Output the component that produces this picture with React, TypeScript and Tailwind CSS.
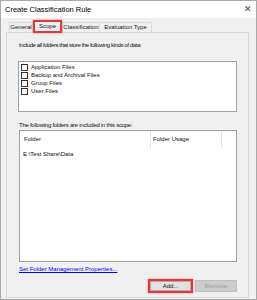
import React from "react";

const font = { fontFamily: '"Liberation Sans", Arial, sans-serif' };

function Checkbox({ label }: { label: string }) {
  return (
    <div className="flex items-center h-[8px]">
      <span className="w-[7px] h-[7px] border border-[#333] bg-white shrink-0" />
      <span className="ml-[3px] text-[6px] leading-none text-[#111]">{label}</span>
    </div>
  );
}

function Tab({ label, width }: { label: string; width: string }) {
  return (
    <div className={`${width} h-[10px] border border-b-0 border-[#d9d9d9] bg-[#f0f0f0] flex items-center justify-center text-[6px] text-[#111]`}>
      {label}
    </div>
  );
}

export default function App() {
  return (
    <div className="w-[257px] h-[300px] bg-[#f0f0f0] border border-[#aaa] flex flex-col overflow-hidden" style={font}>
      {/* title bar */}
      <div className="h-[17px] bg-white flex items-center justify-between pl-[4px] pr-[4px] shrink-0">
        <span className="text-[7.5px] text-[#000]">Create Classification Rule</span>
        <span className="text-[9px] text-[#444] leading-none">✕</span>
      </div>

      <div className="flex-1 flex flex-col pl-[5px] pr-[7px] pt-[2px] pb-[1px]">
        {/* tabs */}
        <div className="flex items-end h-[12px] pl-[3px]">
          <Tab label="General" width="w-[24px]" />
          <div className="relative -mb-px z-10 w-[29px] h-[13px] border-2 border-[#e0393b] bg-[#f0f0f0] shadow-[0_0_2px_rgba(224,57,59,0.6)] flex items-center justify-center text-[6px] text-[#111]">
            Scope
          </div>
          <Tab label="Classification" width="w-[38px]" />
          <div className="-ml-px">
            <Tab label="Evaluation Type" width="w-[53px]" />
          </div>
        </div>

        {/* panel */}
        <div className="flex-1 border border-[#d9d9d9] bg-[#f0f0f0] flex flex-col pl-[12px] pr-[11px] pt-[9px] pb-[4px]">
          <div className="text-[6px] text-[#111] leading-none tracking-[-0.4px]">
            Include all folders that store the following kinds of data:
          </div>

          <div className="mt-[13px] h-[51px] -ml-px border border-[#a0a0a0] bg-white pt-[1px] pl-[2px]">
            <Checkbox label="Application Files" />
            <Checkbox label="Backup and Archival Files" />
            <Checkbox label="Group Files" />
            <Checkbox label="User Files" />
          </div>

          <div className="mt-[10px] text-[6px] text-[#111] leading-none tracking-[-0.26px]">
            The following folders are included in this scope:
          </div>

          <div className="mt-[2px] h-[132px] border border-[#a0a0a0] bg-white flex flex-col">
            <div className="flex h-[17px] items-center text-[6px] text-[#111]">
              <div className="w-[131px] h-full flex items-center pl-[4px] border-r border-[#e5e5e5]">Folder</div>
              <div className="w-[71px] h-full flex items-center pl-[2px] border-r border-[#e5e5e5]">Folder Usage</div>
            </div>
            <div className="pl-[3px] mt-[3px] text-[6px] text-[#111] leading-none">E:\Test Share\Data</div>
          </div>

          <div className="mt-[4px] text-[6px] text-[#0000ff] underline leading-none">
            Set Folder Management Properties...
          </div>

          <div className="mt-auto flex justify-end items-center gap-[2px]">
            <div className="border-2 border-[#e0393b] shadow-[0_0_2px_rgba(224,57,59,0.6)]">
              <div className="w-[41px] h-[10px] bg-[#e1e1e1] border border-[#adadad] flex items-center justify-center text-[6px] text-[#111]">
                Add...
              </div>
            </div>
            <div className="w-[42px] h-[12px] bg-[#cccccc] border border-[#bfbfbf] flex items-center justify-center text-[6px] text-[#a0a0a0]">
              Remove
            </div>
          </div>
        </div>
      </div>
    </div>
  );
}
